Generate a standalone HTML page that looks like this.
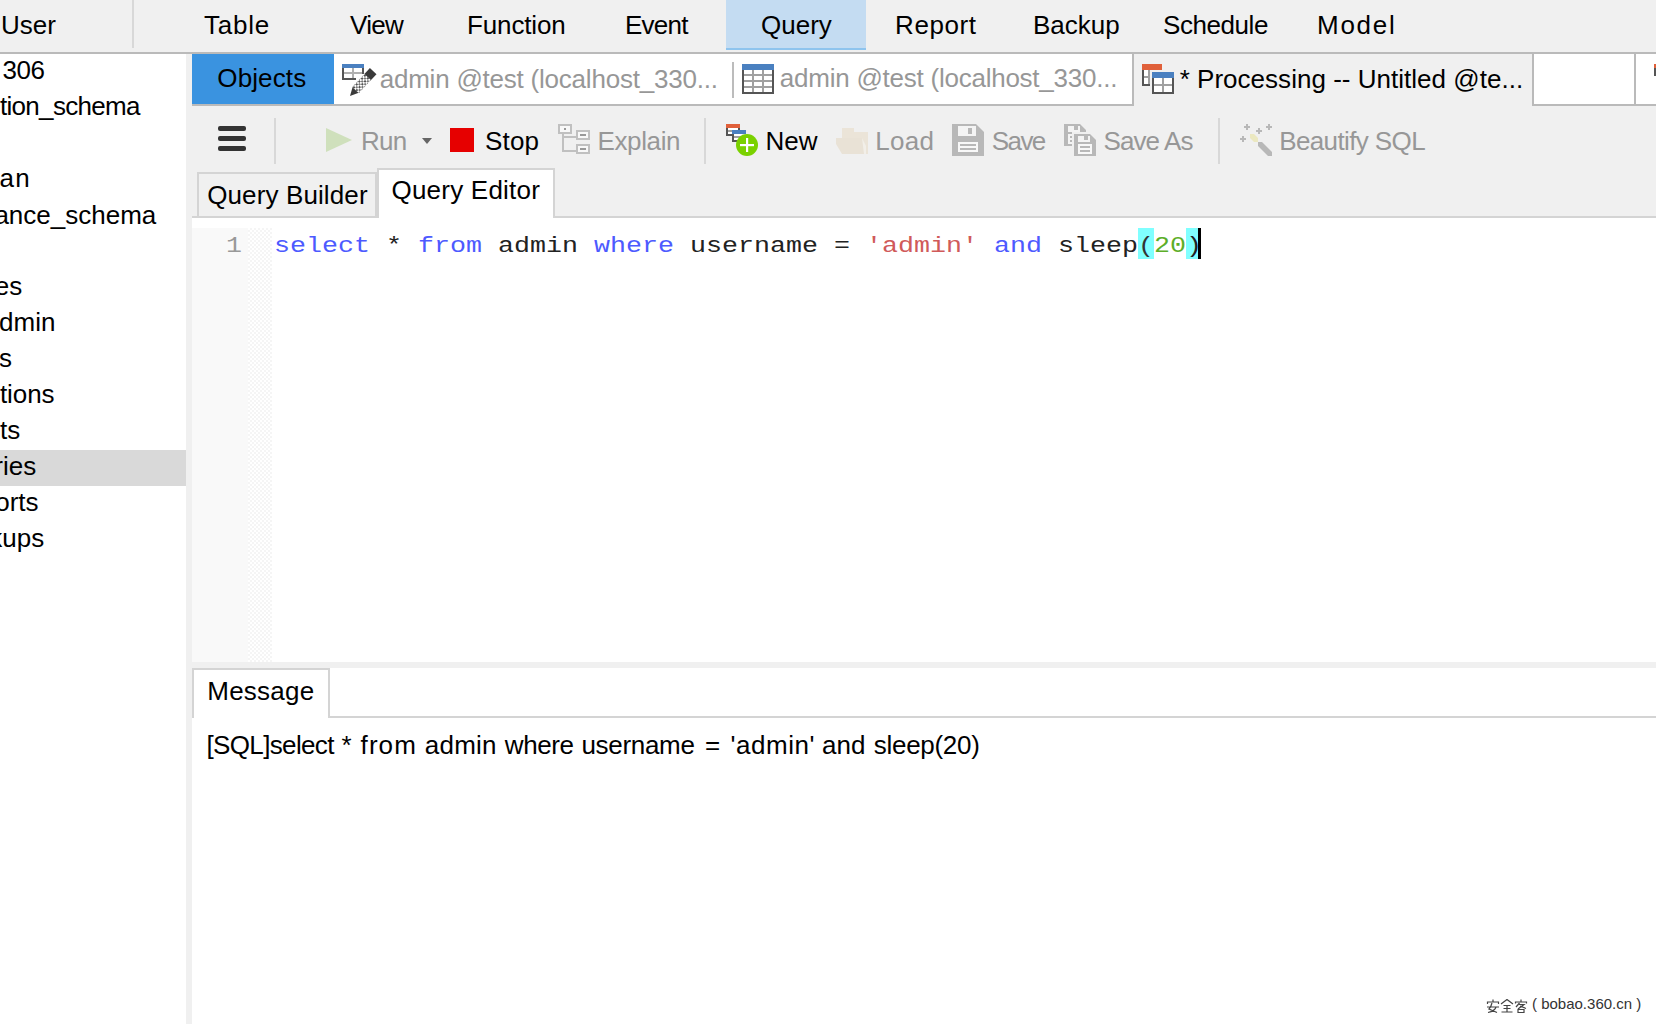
<!DOCTYPE html>
<html><head><meta charset="utf-8">
<style>
html,body{margin:0;padding:0}
body{width:1656px;height:1024px;position:relative;overflow:hidden;background:#f0f0f0;font-family:"Liberation Sans",sans-serif;}
.a{position:absolute}
.t{position:absolute;white-space:pre;font-size:26px;line-height:26px;color:#000}
.code{position:absolute;white-space:pre;font-family:"Liberation Mono",monospace;font-size:26.667px;line-height:26.667px;color:#222;transform:scale(1,0.84);transform-origin:0 20.43px}
svg{position:absolute;overflow:visible}
</style></head>
<body>
<!-- menu bar -->
<div class="a" style="left:726px;top:0;width:140px;height:48px;background:#c4dcf2"></div>
<div class="a" style="left:726px;top:48px;width:140px;height:2px;background:#8ec4ee"></div>
<div class="a" style="left:132px;top:0;width:2px;height:48px;background:#d8d8d8"></div>
<div class="a" style="left:0;top:52px;width:1656px;height:2px;background:#bababa"></div>

<!-- sidebar -->
<div class="a" style="left:0;top:54px;width:186px;height:970px;background:#fff;overflow:hidden">
  <div class="a" style="left:0;top:396px;width:186px;height:36px;background:#d9d9d9"></div>
<div class="t" style="left:2.5px;top:3.3px;letter-spacing:-0.45px">306</div>
<div class="t" style="left:0.0px;top:39.3px;letter-spacing:-0.70px">tion_schema</div>
<div class="t" style="left:-0.5px;top:111.3px;letter-spacing:1.30px">an</div>
<div class="t" style="left:-95.2px;top:147.5px">performance_schema</div>
<div class="t" style="left:-53.0px;top:219.2px">Tables</div>
<div class="t" style="left:-15.4px;top:255.2px">admin</div>
<div class="t" style="left:-57.0px;top:291.0px">Views</div>
<div class="t" style="left:0.0px;top:327.0px;letter-spacing:-0.10px">tions</div>
<div class="t" style="left:0.0px;top:363.0px;letter-spacing:0.00px">ts</div>
<div class="t" style="left:-54.8px;top:399.0px">Queries</div>
<div class="t" style="left:-52.5px;top:435.0px">Reports</div>
<div class="t" style="left:-55.6px;top:471.0px">Backups</div>
</div>

<!-- tab bar -->
<div class="a" style="left:192px;top:54px;width:1464px;height:50px;background:#fff"></div>
<div class="a" style="left:192px;top:104px;width:1464px;height:2px;background:#bababa"></div>
<div class="a" style="left:192px;top:54px;width:142px;height:50px;background:#3a93e0"></div>
<div class="a" style="left:732px;top:62px;width:2px;height:36px;background:#bcbcbc"></div>
<div class="a" style="left:1132px;top:54px;width:2px;height:52px;background:#bababa"></div>
<div class="a" style="left:1134px;top:54px;width:398px;height:52px;background:#f0f0f0"></div>
<div class="a" style="left:1532px;top:54px;width:2px;height:52px;background:#bababa"></div>
<div class="a" style="left:1634px;top:54px;width:2px;height:50px;background:#bababa"></div>
<div class="a" style="left:1654px;top:64px;width:2px;height:4px;background:#e0603a"></div>
<div class="a" style="left:1654px;top:68px;width:2px;height:8px;background:#555"></div>

<!-- tab1 icon: table + pencil -->
<svg style="left:0;top:0" width="1656" height="1024">
 <rect x="342" y="64" width="22" height="4" fill="#4a80c0"/>
 <rect x="344" y="72" width="18" height="2" fill="#b0b0b0"/>
 <rect x="352" y="68" width="2" height="10" fill="#b0b0b0"/>
 <rect x="342" y="68" width="2" height="12" fill="#555"/>
 <rect x="342" y="78" width="14" height="2" fill="#555"/>
 <rect x="362" y="68" width="2" height="6" fill="#555"/>
 <defs><pattern id="chk" width="4" height="4" patternUnits="userSpaceOnUse"><rect width="4" height="4" fill="#fff"/><rect width="2" height="2" fill="#555"/><rect x="2" y="2" width="2" height="2" fill="#777"/></pattern></defs>
 <g transform="translate(350,96) rotate(-47)">
  <polygon points="0,0 9,-4.5 9,4.5" fill="#3a3a3a"/>
  <rect x="8" y="-4.5" width="19" height="9" fill="url(#chk)"/>
  <rect x="26" y="-4.5" width="8" height="9" fill="#3a3a3a"/>
 </g>
</svg>
<!-- tab2 icon: grid -->
<svg style="left:0;top:0" width="1656" height="1024">
 <rect x="742" y="64" width="32" height="6" fill="#4a80c0"/>
 <rect x="744" y="70" width="28" height="22" fill="#fff"/>
 <rect x="752" y="70" width="2" height="22" fill="#a0a0a0"/>
 <rect x="762" y="70" width="2" height="22" fill="#a0a0a0"/>
 <rect x="744" y="74" width="28" height="2" fill="#a0a0a0"/>
 <rect x="744" y="80" width="28" height="2" fill="#a0a0a0"/>
 <rect x="744" y="86" width="28" height="2" fill="#a0a0a0"/>
 <rect x="742" y="70" width="2" height="24" fill="#555"/>
 <rect x="772" y="70" width="2" height="24" fill="#555"/>
 <rect x="742" y="92" width="32" height="2" fill="#555"/>
</svg>
<!-- tab3 icon -->
<svg style="left:0;top:0" width="1656" height="1024">
 <rect x="1142" y="64" width="20" height="6" fill="#e0603a"/>
 <rect x="1144" y="70" width="4" height="14" fill="#fff"/>
 <rect x="1144" y="76" width="4" height="2" fill="#a0a0a0"/>
 <rect x="1148" y="70" width="2" height="14" fill="#a0a0a0"/>
 <rect x="1142" y="70" width="2" height="16" fill="#555"/>
 <rect x="1142" y="84" width="8" height="2" fill="#555"/>
 <rect x="1152" y="72" width="22" height="6" fill="#4a80c0"/>
 <rect x="1154" y="78" width="18" height="14" fill="#fff"/>
 <rect x="1162" y="78" width="2" height="14" fill="#a0a0a0"/>
 <rect x="1154" y="84" width="18" height="2" fill="#a0a0a0"/>
 <rect x="1152" y="78" width="2" height="16" fill="#555"/>
 <rect x="1172" y="78" width="2" height="16" fill="#555"/>
 <rect x="1152" y="92" width="22" height="2" fill="#555"/>
</svg>

<!-- toolbar -->
<div class="a" style="left:218px;top:126px;width:28px;height:5px;background:#333;border-radius:2px"></div>
<div class="a" style="left:218px;top:136px;width:28px;height:5px;background:#333;border-radius:2px"></div>
<div class="a" style="left:218px;top:146px;width:28px;height:5px;background:#333;border-radius:2px"></div>
<div class="a" style="left:274px;top:118px;width:2px;height:46px;background:#d8d8d8"></div>
<div class="a" style="left:704px;top:118px;width:2px;height:46px;background:#d8d8d8"></div>
<div class="a" style="left:1218px;top:118px;width:2px;height:46px;background:#d8d8d8"></div>
<svg style="left:0;top:0" width="1656" height="1024">
 <polygon points="326,128 352,140 326,152" fill="#cfe0bc"/>
 <polygon points="422,138 432,138 427,144" fill="#666"/>
 <rect x="450" y="128" width="24" height="24" fill="#e60000"/>
 <!-- explain -->
 <rect x="559" y="125" width="12" height="8" fill="#f8f8f8" stroke="#c0c0c0" stroke-width="2"/>
 <rect x="564" y="128" width="2" height="2" fill="#999"/>
 <rect x="562" y="134" width="2" height="18" fill="#c0c0c0"/>
 <rect x="562" y="136" width="14" height="2" fill="#c0c0c0"/>
 <rect x="562" y="150" width="14" height="2" fill="#c0c0c0"/>
 <rect x="577" y="131" width="12" height="8" fill="#f8f8f8" stroke="#c0c0c0" stroke-width="2"/>
 <rect x="580" y="134" width="6" height="2" fill="#999"/>
 <rect x="577" y="145" width="12" height="8" fill="#f8f8f8" stroke="#c0c0c0" stroke-width="2"/>
 <rect x="580" y="148" width="6" height="2" fill="#999"/>
 <!-- new -->
 <rect x="726" y="124" width="14" height="4" fill="#e0603a"/>
 <rect x="728" y="128" width="10" height="6" fill="#fff"/>
 <rect x="728" y="130" width="10" height="2" fill="#a0a0a0"/>
 <rect x="726" y="128" width="2" height="8" fill="#555"/>
 <rect x="726" y="134" width="8" height="2" fill="#555"/>
 <rect x="738" y="128" width="2" height="2" fill="#555"/>
 <rect x="732" y="130" width="14" height="4" fill="#4a80c0"/>
 <rect x="734" y="134" width="8" height="6" fill="#fff"/>
 <rect x="734" y="136" width="8" height="2" fill="#a0a0a0"/>
 <rect x="732" y="134" width="2" height="8" fill="#555"/>
 <rect x="732" y="140" width="8" height="2" fill="#555"/>
 <circle cx="747" cy="145" r="11" fill="#7ad100"/>
 <rect x="740" y="144" width="14" height="2.2" fill="#fff"/>
 <rect x="746" y="138" width="2.2" height="14" fill="#fff"/>
 <!-- load -->
 <polygon points="842,128 854,128 854,132 868,132 868,154 842,154" fill="#ebe4d8"/>
 <polygon points="836,138 862,138 866,148 866,154 842,154 836,144" fill="#e9e2d6"/>
 <polygon points="862,138 866,146 866,154 864,154" fill="#f2efe9"/>
 <!-- save -->
 <polygon points="952,124 976,124 984,132 984,156 952,156" fill="#b8b8b8"/>
 <rect x="958" y="126" width="18" height="10" fill="#f4f4f4"/>
 <rect x="968" y="128" width="4" height="6" fill="#b8b8b8"/>
 <rect x="958" y="142" width="20" height="10" fill="#f8f8f8"/>
 <rect x="960" y="144" width="16" height="2" fill="#b8b8b8"/>
 <rect x="960" y="148" width="16" height="2" fill="#b8b8b8"/>
 <!-- save as -->
 <polygon points="1064,124 1080,124 1086,130 1086,132 1072,132 1072,146 1064,146" fill="#b8b8b8"/>
 <rect x="1068" y="126" width="12" height="6" fill="#f4f4f4"/>
 <rect x="1074" y="126" width="4" height="4" fill="#b8b8b8"/>
 <rect x="1068" y="134" width="4" height="10" fill="#f4f4f4"/>
 <rect x="1070" y="136" width="2" height="2" fill="#b8b8b8"/>
 <rect x="1070" y="140" width="2" height="2" fill="#b8b8b8"/>
 <polygon points="1074,134 1090,134 1096,140 1096,156 1074,156" fill="#b8b8b8"/>
 <rect x="1078" y="136" width="12" height="6" fill="#f4f4f4"/>
 <rect x="1084" y="136" width="4" height="4" fill="#b8b8b8"/>
 <rect x="1078" y="144" width="14" height="10" fill="#f8f8f8"/>
 <rect x="1080" y="146" width="10" height="2" fill="#b8b8b8"/>
 <rect x="1080" y="150" width="10" height="2" fill="#b8b8b8"/>
 <!-- beautify -->
 <g fill="#b8b8b8">
  <rect x="1244" y="126" width="6" height="2"/><rect x="1246" y="124" width="2" height="6"/>
  <rect x="1266" y="126" width="6" height="2"/><rect x="1268" y="124" width="2" height="6"/>
  <rect x="1256" y="130" width="6" height="2"/><rect x="1258" y="128" width="2" height="6"/>
  <rect x="1240" y="138" width="6" height="2"/><rect x="1242" y="136" width="2" height="6"/>
  <polygon points="1258,142 1262,142 1272,152 1272,156 1268,156 1258,146"/>
 </g>
 <polygon points="1250,134 1254,134 1258,138 1258,142 1254,142 1250,138" fill="#ebe8c0"/>
</svg>

<!-- query tabs -->
<div class="a" style="left:192px;top:216px;width:1464px;height:2px;background:#d4d4d4"></div>
<div class="a" style="left:197px;top:172px;width:180px;height:44px;background:#f0f0f0;border:2px solid #d4d4d4;border-bottom:none;box-sizing:border-box"></div>
<div class="a" style="left:377px;top:168px;width:178px;height:50px;background:#fff;border:2px solid #d4d4d4;border-bottom:none;box-sizing:border-box"></div>

<!-- editor -->
<div class="a" style="left:192px;top:218px;width:1464px;height:444px;background:#fff"></div>
<div class="a" style="left:192px;top:228px;width:56px;height:434px;background:#f9f9f9"></div>
<div class="a" style="left:248px;top:228px;width:24px;height:434px;background-color:#fff;background-image:conic-gradient(#f5f5f5 25%,transparent 0 50%,#f5f5f5 0 75%,transparent 0);background-size:4px 4px"></div>
<div class="a" style="left:1138px;top:228px;width:16px;height:31px;background:#80ffff"></div>
<div class="a" style="left:1186px;top:228px;width:12px;height:31px;background:#80ffff"></div>
<div class="code" style="left:226px;top:231.57px;color:#999">1</div>
<div class="code" style="left:274px;top:231.57px"><span style="color:#4d5aff">select</span> * <span style="color:#4d5aff">from</span> admin <span style="color:#4d5aff">where</span> username = <span style="color:#d05a5a">'admin'</span> <span style="color:#4d5aff">and</span> sleep<span style="color:#333">(</span><span style="color:#5cae28">20</span>)</div>
<div class="a" style="left:1198px;top:228px;width:3px;height:31px;background:#000"></div>

<!-- message panel -->
<div class="a" style="left:192px;top:668px;width:1464px;height:356px;background:#fff"></div>
<div class="a" style="left:192px;top:668px;width:138px;height:50px;border:2px solid #d4d4d4;border-bottom:none;box-sizing:border-box"></div>
<div class="a" style="left:328px;top:716px;width:1328px;height:2px;background:#d4d4d4"></div>

<div class="t" style="left:1.0px;top:11.8px;letter-spacing:0.00px;color:#000">User</div>
<div class="t" style="left:204.0px;top:11.8px;letter-spacing:0.75px;color:#000">Table</div>
<div class="t" style="left:350.0px;top:11.8px;letter-spacing:-0.67px;color:#000">View</div>
<div class="t" style="left:467.0px;top:11.8px;letter-spacing:-0.14px;color:#000">Function</div>
<div class="t" style="left:625.0px;top:11.8px;letter-spacing:-0.75px;color:#000">Event</div>
<div class="t" style="left:761.0px;top:11.8px;letter-spacing:0.00px;color:#000">Query</div>
<div class="t" style="left:895.0px;top:11.8px;letter-spacing:0.60px;color:#000">Report</div>
<div class="t" style="left:1033.0px;top:11.8px;letter-spacing:0.00px;color:#000">Backup</div>
<div class="t" style="left:1163.0px;top:11.8px;letter-spacing:-0.43px;color:#000">Schedule</div>
<div class="t" style="left:1317.0px;top:11.8px;letter-spacing:1.75px;color:#000">Model</div>
<div class="t" style="left:217.3px;top:65.3px;letter-spacing:0.12px;color:#000">Objects</div>
<div class="t" style="left:379.7px;top:65.5px;letter-spacing:-0.22px;color:#979797">admin @test (localhost_330...</div>
<div class="t" style="left:779.8px;top:65.2px;letter-spacing:-0.24px;color:#979797">admin @test (localhost_330...</div>
<div class="t" style="left:1179.7px;top:66.0px;letter-spacing:0.02px;color:#000">* Processing -- Untitled @te...</div>
<div class="t" style="left:361.1px;top:127.5px;letter-spacing:-0.75px;color:#979797">Run</div>
<div class="t" style="left:485.0px;top:127.5px;letter-spacing:0.17px;color:#000">Stop</div>
<div class="t" style="left:597.5px;top:127.5px;letter-spacing:-0.38px;color:#979797">Explain</div>
<div class="t" style="left:765.4px;top:127.5px;letter-spacing:0.10px;color:#000">New</div>
<div class="t" style="left:875.3px;top:127.5px;letter-spacing:0.27px;color:#979797">Load</div>
<div class="t" style="left:991.8px;top:127.5px;letter-spacing:-1.60px;color:#979797">Save</div>
<div class="t" style="left:1103.6px;top:127.5px;letter-spacing:-0.93px;color:#979797">Save As</div>
<div class="t" style="left:1279.2px;top:127.5px;letter-spacing:-0.61px;color:#979797">Beautify SQL</div>
<div class="t" style="left:207.2px;top:181.5px;letter-spacing:0.12px;color:#000">Query Builder</div>
<div class="t" style="left:391.5px;top:176.6px;letter-spacing:0.22px;color:#000">Query Editor</div>
<div class="t" style="left:207.3px;top:678.0px;letter-spacing:0.22px;color:#000">Message</div>
<div class="t" style="left:206.5px;top:731.8px;letter-spacing:-0.65px;color:#000">[SQL]select</div>
<div class="t" style="left:341.5px;top:731.8px;letter-spacing:0.00px;color:#000">*</div>
<div class="t" style="left:360.6px;top:731.8px;letter-spacing:1.07px;color:#000">from</div>
<div class="t" style="left:424.8px;top:731.8px;letter-spacing:0.22px;color:#000">admin</div>
<div class="t" style="left:504.8px;top:731.8px;letter-spacing:-0.40px;color:#000">where</div>
<div class="t" style="left:581.4px;top:731.8px;letter-spacing:-0.31px;color:#000">username</div>
<div class="t" style="left:705.1px;top:731.8px;letter-spacing:0.00px;color:#000">=</div>
<div class="t" style="left:730.4px;top:731.8px;letter-spacing:0.55px;color:#000">&#x27;admin&#x27;</div>
<div class="t" style="left:822.0px;top:731.8px;letter-spacing:0.10px;color:#000">and</div>
<div class="t" style="left:873.8px;top:731.8px;letter-spacing:-0.30px;color:#000">sleep(20)</div>

<!-- watermark -->
<svg style="left:1486px;top:999px" width="42" height="14" fill="none" stroke="#444" stroke-width="1.2">
 <path d="M7,0.5V2.5M1.5,5V3H12.5V5M1,8H13M6,4Q5,8 3,10L11,13.5M10,8Q9,12 2,13.5"/>
 <path transform="translate(14,0)" d="M7,0.5L1,5M7,0.5L13,5M3.5,6.5H10.5M3.5,9.5H10.5M1.5,13H12.5M7,6.5V13"/>
 <path transform="translate(28,0)" d="M7,0.5V2.5M1.5,4.5V3H12.5V4.5M5.5,4L2,8M5,5.5H10L4,10M6,7L12,9.5M4,10.5H10V13.5H4Z"/>
</svg>
<div class="a" style="left:1532px;top:996px;font-size:15px;line-height:16px;color:#333;white-space:pre">( bobao.360.cn )</div>
</body></html>
